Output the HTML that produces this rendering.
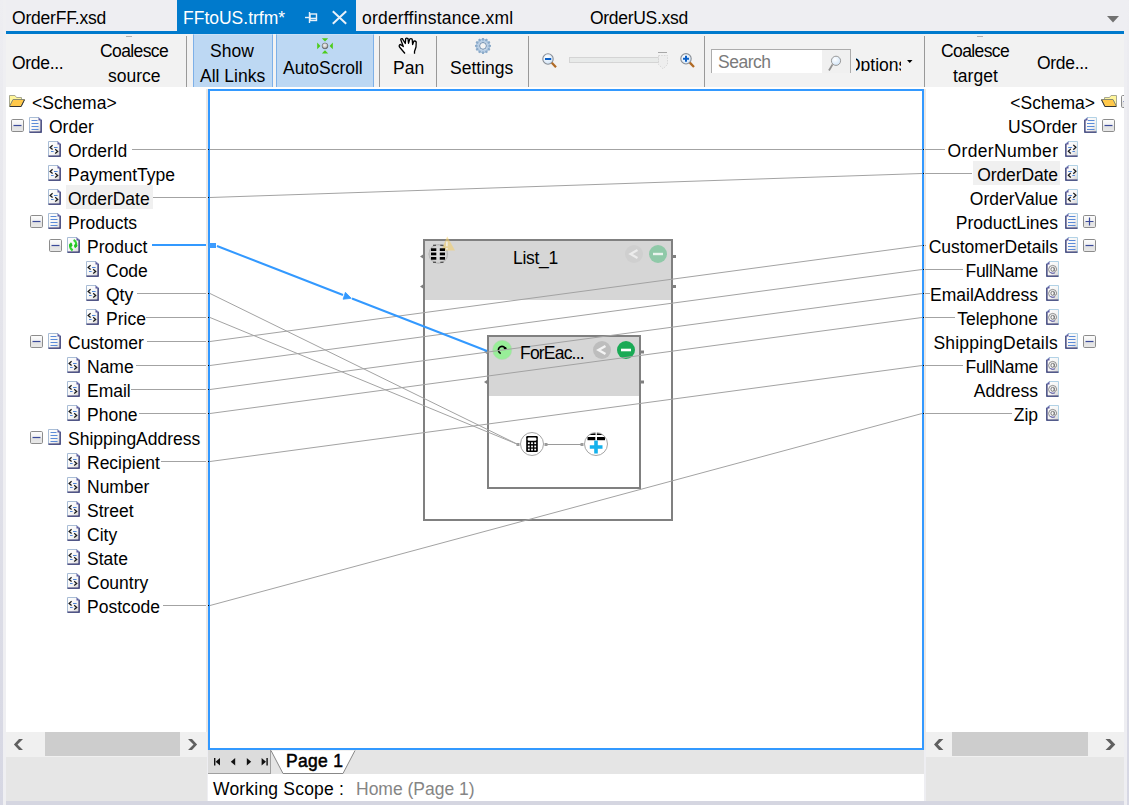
<!DOCTYPE html>
<html><head><meta charset="utf-8"><style>
*{margin:0;padding:0;box-sizing:border-box}
html,body{width:1129px;height:805px;overflow:hidden;background:#eeeef2;font-family:"Liberation Sans",sans-serif;font-size:17.5px;color:#000}
.a{position:absolute}
.t{position:absolute;line-height:20px;white-space:nowrap}
.sep{position:absolute;top:36px;width:1px;height:51px;background:#999}
</style></head><body>
<div class="a" style="left:0px;top:0px;width:6px;height:805px;background:linear-gradient(#eeeef2,#e6e6ec 30%,#d6d7e3)"></div>
<div class="a" style="left:3px;top:0px;width:3px;height:805px;background:#efeff2"></div>
<div class="t" style="left:12px;top:8px;letter-spacing:-0.2px">OrderFF.xsd</div>
<div class="a" style="left:177px;top:0px;width:179px;height:34px;background:#007acc"></div>
<div class="t" style="left:183px;top:8px;color:#fff">FFtoUS.trfm*</div>
<div class="t" style="left:362px;top:8px;letter-spacing:0.2px">orderffinstance.xml</div>
<div class="t" style="left:590px;top:8px;letter-spacing:-0.3px">OrderUS.xsd</div>
<div class="a" style="left:6px;top:31px;width:1118px;height:3px;background:#007acc"></div>
<svg class="a" style="left:300px;top:8px" width="52" height="20" viewBox="0 0 52 20">
<g stroke="#e8f1f9" fill="none" stroke-width="1.4">
<path d="M5 9.5 H9"/><path d="M9.5 4 V15"/><rect x="10" y="6" width="6.5" height="6.5"/><path d="M10 10.5 H16.5" stroke-width="1.6"/>
<path d="M32.8 3.3 L46.2 15.7 M46.2 3.3 L32.8 15.7" stroke-width="2"/>
</g></svg>
<svg class="a" style="left:1107px;top:16px" width="13" height="7"><path d="M0 0 H12 L6 6.5 Z" fill="#717171"/></svg>
<div class="a" style="left:6px;top:34px;width:1118px;height:53px;background:#f2f2f2"></div>
<div class="t" style="left:12px;top:53px;letter-spacing:-0.3px">Orde...</div>
<div class="t" style="left:100px;top:41px;letter-spacing:-0.6px">Coalesce</div>
<div class="t" style="left:108px;top:66px;">source</div>
<div class="sep" style="left:186px"></div>
<div class="a" style="left:193px;top:34px;width:80px;height:53px;background:#bdd8f3;border-left:1px solid #7db0e8;border-right:1px solid #7db0e8;border-top:1px solid #c9e0f6"></div>
<div class="t" style="left:210px;top:41px;">Show</div>
<div class="t" style="left:200px;top:66px;">All Links</div>
<div class="a" style="left:276px;top:34px;width:98px;height:53px;background:#bdd8f3;border-left:1px solid #7db0e8;border-right:1px solid #7db0e8;border-top:1px solid #c9e0f6"></div>
<div class="t" style="left:283px;top:58px;">AutoScroll</div>
<div class="sep" style="left:379px"></div>
<div class="t" style="left:393px;top:58px;">Pan</div>
<div class="sep" style="left:436px"></div>
<div class="t" style="left:450px;top:58px;">Settings</div>
<div class="sep" style="left:528px"></div>
<div class="sep" style="left:704px"></div>
<div class="sep" style="left:924px"></div>
<div class="t" style="left:941px;top:41px;letter-spacing:-0.6px">Coalesce</div>
<div class="t" style="left:953px;top:66px;">target</div>
<div class="t" style="left:1037px;top:53px;letter-spacing:-0.3px">Orde...</div>
<div class="a" style="left:6px;top:87px;width:201px;height:645px;background:#fff"></div>
<div class="a" style="left:206px;top:87px;width:720px;height:2px;background:#fff"></div>
<div class="a" style="left:206px;top:89px;width:2px;height:661px;background:#ebe7e4"></div>
<div class="a" style="left:924px;top:89px;width:2px;height:661px;background:#ece8e5"></div>
<div class="a" style="left:208px;top:89px;width:716px;height:661px;border:2px solid #3399ff;background:#fff"></div>
<div class="a" style="left:926px;top:87px;width:198px;height:645px;background:#fff"></div>
<svg width="0" height="0" style="position:absolute"><defs>
<linearGradient id="gx" x1="0" y1="0" x2="0" y2="1"><stop offset="0" stop-color="#fdfdfd"/><stop offset="0.5" stop-color="#f0f0f0"/><stop offset="0.55" stop-color="#e2e2e2"/><stop offset="1" stop-color="#e8e8e8"/></linearGradient>
<linearGradient id="gp" x1="0" y1="0" x2="1" y2="1"><stop offset="0" stop-color="#ffffff"/><stop offset="0.6" stop-color="#f4f4f4"/><stop offset="1" stop-color="#d0d0d0"/></linearGradient>
<symbol id="exp" viewBox="0 0 13 13"><rect x="0.5" y="0.5" width="12" height="12" rx="1.2" fill="url(#gx)" stroke="#8c8c8c"/><path d="M2.5 6.5 H10.5" stroke="#3b4a9a" stroke-width="1.2"/></symbol>
<symbol id="expp" viewBox="0 0 13 13"><rect x="0.5" y="0.5" width="12" height="12" rx="1.2" fill="url(#gx)" stroke="#8c8c8c"/><path d="M2.5 6.5 H10.5 M6.5 2.5 V10.5" stroke="#3b4a9a" stroke-width="1.2"/></symbol>
<symbol id="page" viewBox="0 0 13 16"><path d="M0.5 0.5 H10 L12.5 3 V15.5 H0.5 Z" fill="url(#gp)" stroke="#a9bdd6" stroke-width="1"/><path d="M12.1 2.8 V15.1 H0.5" stroke="#34346e" stroke-width="1.3" fill="none"/><path d="M9.5 0.3 L12.6 3.4 L9.5 3.4 Z" fill="#5a5aa0"/></symbol>
<symbol id="pager" viewBox="0 0 13 16"><path d="M12.5 0.5 H3 L0.5 3 V15.5 H12.5 Z" fill="url(#gp)" stroke="#b2d2e6" stroke-width="1"/><path d="M0.9 2.8 V15.1 H12.5" stroke="#34346e" stroke-width="1.3" fill="none"/><path d="M3.5 0.3 L0.4 3.4 L3.5 3.4 Z" fill="#5a5aa0"/></symbol>
<symbol id="doc" viewBox="0 0 13 16"><use href="#page"/><path d="M2.5 3.5 H8.5 M2.5 6.5 H9.5 M2.5 9.5 H9.5 M2.5 12.5 H9.5" stroke="#5b8bd8" stroke-width="1"/></symbol>
<symbol id="docr" viewBox="0 0 13 16"><use href="#pager"/><path d="M4 3.5 H10.5 M3 6.5 H10.5 M3 9.5 H10.5 M3 12.5 H10.5" stroke="#5b8bd8" stroke-width="1"/></symbol>
<symbol id="fld" viewBox="0 0 13 16"><use href="#page"/><path d="M4.6 4.3 L2.1 6.4 L4.6 8.5 M7.2 8.3 L9.7 10.4 L7.2 12.5" stroke="#1a1a1a" stroke-width="1.25" fill="none"/><path d="M6 6.5 H9.6 M3 10.5 H5.6" stroke="#4f86d8" stroke-width="1.1"/></symbol>
<symbol id="fldr" viewBox="0 0 13 16"><use href="#pager"/><path d="M8.3 3.9 L10.9 6.3 L8.3 8.7 M5.8 7.9 L3.3 10.2 L5.8 12.5" stroke="#1a1a1a" stroke-width="1.25" fill="none"/><path d="M3.2 6.5 H6.9 M7.4 10.5 H9.9" stroke="#4f86d8" stroke-width="1.1"/></symbol>
<symbol id="atr" viewBox="0 0 13 16"><use href="#pager"/><path d="M9.2 11.6 Q7.5 12.6 6 12.4 Q2.6 12 2.6 8.3 Q2.8 4.6 6.6 4.4 Q10.6 4.5 10.6 8.2 Q10.5 10.3 9 10.4 Q8.3 10.4 8.3 9.4 V6.6" stroke="#808080" stroke-width="0.9" fill="none"/><ellipse cx="6.6" cy="8.3" rx="1.7" ry="2" fill="none" stroke="#6a6a6a" stroke-width="0.9"/><path d="M4.3 11.4 Q6.3 12.8 8.8 11.9" stroke="#5656c8" stroke-width="0.8" fill="none"/></symbol>
<symbol id="rep" viewBox="0 0 13 16"><use href="#page"/><path d="M4.6 6 C2.2 8 2.5 11.2 5.6 13.5" stroke="#33d433" stroke-width="2.2" fill="none"/><circle cx="3.7" cy="8.2" r="1.7" fill="#22c422"/><path d="M6.6 3 C9.6 4.4 10 8 7.8 10.6" stroke="#33d433" stroke-width="2.2" fill="none"/><circle cx="8.7" cy="8.6" r="1.7" fill="#22c422"/></symbol>
<symbol id="fold" viewBox="0 0 16 12"><path d="M0.5 0.5 H6 L7.5 2.5 H12.5 V5 H4 L0.5 11.5 Z" fill="#fff59a" stroke="#a8a890"/><path d="M4 4.5 H15.5 L12 11.5 H0.5 Z" fill="#ffc84a" stroke="#8a8a70"/><path d="M1 11.5 H12.2 L15.5 4.8" stroke="#333" stroke-width="1" fill="none"/></symbol>
</defs></svg>
<svg class="a" style="left:9px;top:95px" width="16" height="12"><use href="#fold"/></svg>
<div class="t" style="left:32px;top:93px;">&lt;Schema&gt;</div>
<svg class="a" style="left:11px;top:119px" width="13" height="13"><use href="#exp"/></svg>
<svg class="a" style="left:29px;top:117px" width="13" height="16"><use href="#doc"/></svg>
<div class="t" style="left:49px;top:117px;">Order</div>
<svg class="a" style="left:48px;top:141px" width="13" height="16"><use href="#fld"/></svg>
<div class="t" style="left:68px;top:141px;">OrderId</div>
<svg class="a" style="left:48px;top:165px" width="13" height="16"><use href="#fld"/></svg>
<div class="t" style="left:68px;top:165px;">PaymentType</div>
<div class="a" style="left:66px;top:185px;width:87px;height:24px;background:#f0f0f0"></div>
<svg class="a" style="left:48px;top:189px" width="13" height="16"><use href="#fld"/></svg>
<div class="t" style="left:68px;top:189px;">OrderDate</div>
<svg class="a" style="left:30px;top:215px" width="13" height="13"><use href="#exp"/></svg>
<svg class="a" style="left:48px;top:213px" width="13" height="16"><use href="#doc"/></svg>
<div class="t" style="left:68px;top:213px;">Products</div>
<svg class="a" style="left:49px;top:239px" width="13" height="13"><use href="#exp"/></svg>
<svg class="a" style="left:67px;top:237px" width="13" height="16"><use href="#rep"/></svg>
<div class="t" style="left:87px;top:237px;">Product</div>
<svg class="a" style="left:86px;top:261px" width="13" height="16"><use href="#fld"/></svg>
<div class="t" style="left:106px;top:261px;">Code</div>
<svg class="a" style="left:86px;top:285px" width="13" height="16"><use href="#fld"/></svg>
<div class="t" style="left:106px;top:285px;">Qty</div>
<svg class="a" style="left:86px;top:309px" width="13" height="16"><use href="#fld"/></svg>
<div class="t" style="left:106px;top:309px;">Price</div>
<svg class="a" style="left:30px;top:335px" width="13" height="13"><use href="#exp"/></svg>
<svg class="a" style="left:48px;top:333px" width="13" height="16"><use href="#doc"/></svg>
<div class="t" style="left:68px;top:333px;">Customer</div>
<svg class="a" style="left:67px;top:357px" width="13" height="16"><use href="#fld"/></svg>
<div class="t" style="left:87px;top:357px;">Name</div>
<svg class="a" style="left:67px;top:381px" width="13" height="16"><use href="#fld"/></svg>
<div class="t" style="left:87px;top:381px;">Email</div>
<svg class="a" style="left:67px;top:405px" width="13" height="16"><use href="#fld"/></svg>
<div class="t" style="left:87px;top:405px;">Phone</div>
<svg class="a" style="left:30px;top:431px" width="13" height="13"><use href="#exp"/></svg>
<svg class="a" style="left:48px;top:429px" width="13" height="16"><use href="#doc"/></svg>
<div class="t" style="left:68px;top:429px;">ShippingAddress</div>
<svg class="a" style="left:67px;top:453px" width="13" height="16"><use href="#fld"/></svg>
<div class="t" style="left:87px;top:453px;">Recipient</div>
<svg class="a" style="left:67px;top:477px" width="13" height="16"><use href="#fld"/></svg>
<div class="t" style="left:87px;top:477px;">Number</div>
<svg class="a" style="left:67px;top:501px" width="13" height="16"><use href="#fld"/></svg>
<div class="t" style="left:87px;top:501px;">Street</div>
<svg class="a" style="left:67px;top:525px" width="13" height="16"><use href="#fld"/></svg>
<div class="t" style="left:87px;top:525px;">City</div>
<svg class="a" style="left:67px;top:549px" width="13" height="16"><use href="#fld"/></svg>
<div class="t" style="left:87px;top:549px;">State</div>
<svg class="a" style="left:67px;top:573px" width="13" height="16"><use href="#fld"/></svg>
<div class="t" style="left:87px;top:573px;">Country</div>
<svg class="a" style="left:67px;top:597px" width="13" height="16"><use href="#fld"/></svg>
<div class="t" style="left:87px;top:597px;">Postcode</div>
<div class="t" style="right:34px;top:93px;">&lt;Schema&gt;</div>
<svg class="a" style="left:1101px;top:95px;transform:scaleX(-1)" width="16" height="12"><use href="#fold"/></svg>
<div class="t" style="right:52px;top:117px;">USOrder</div>
<svg class="a" style="left:1084px;top:117px" width="13" height="16"><use href="#docr"/></svg>
<svg class="a" style="left:1102px;top:119px" width="13" height="13"><use href="#exp"/></svg>
<div class="t" style="right:70.65px;top:141px;letter-spacing:0.35px;">OrderNumber</div>
<svg class="a" style="left:1065px;top:141px" width="13" height="16"><use href="#fldr"/></svg>
<div class="a" style="left:973px;top:161px;width:87px;height:24px;background:#f0f0f0"></div>
<div class="t" style="right:71px;top:165px;letter-spacing:-0.1px;">OrderDate</div>
<svg class="a" style="left:1065px;top:165px" width="13" height="16"><use href="#fldr"/></svg>
<div class="t" style="right:71px;top:189px;">OrderValue</div>
<svg class="a" style="left:1065px;top:189px" width="13" height="16"><use href="#fldr"/></svg>
<div class="t" style="right:71px;top:213px;">ProductLines</div>
<svg class="a" style="left:1065px;top:213px" width="13" height="16"><use href="#docr"/></svg>
<svg class="a" style="left:1083px;top:215px" width="13" height="13"><use href="#expp"/></svg>
<div class="t" style="right:71px;top:237px;">CustomerDetails</div>
<svg class="a" style="left:1065px;top:237px" width="13" height="16"><use href="#docr"/></svg>
<svg class="a" style="left:1083px;top:239px" width="13" height="13"><use href="#exp"/></svg>
<div class="t" style="right:91px;top:261px;letter-spacing:-0.3px;">FullName</div>
<svg class="a" style="left:1046px;top:261px" width="13" height="16"><use href="#atr"/></svg>
<div class="t" style="right:91px;top:285px;">EmailAddress</div>
<svg class="a" style="left:1046px;top:285px" width="13" height="16"><use href="#atr"/></svg>
<div class="t" style="right:91px;top:309px;">Telephone</div>
<svg class="a" style="left:1046px;top:309px" width="13" height="16"><use href="#atr"/></svg>
<div class="t" style="right:71px;top:333px;letter-spacing:0.2px;">ShippingDetails</div>
<svg class="a" style="left:1065px;top:333px" width="13" height="16"><use href="#docr"/></svg>
<svg class="a" style="left:1083px;top:335px" width="13" height="13"><use href="#exp"/></svg>
<div class="t" style="right:91px;top:357px;letter-spacing:-0.3px;">FullName</div>
<svg class="a" style="left:1046px;top:357px" width="13" height="16"><use href="#atr"/></svg>
<div class="t" style="right:91px;top:381px;">Address</div>
<svg class="a" style="left:1046px;top:381px" width="13" height="16"><use href="#atr"/></svg>
<div class="t" style="right:91px;top:405px;">Zip</div>
<svg class="a" style="left:1046px;top:405px" width="13" height="16"><use href="#atr"/></svg>
<svg class="a" style="left:0;top:0" width="1129" height="805"><rect x="424" y="240" width="248" height="280" fill="#fff" stroke="#808080" stroke-width="2"/><rect x="425" y="241" width="246" height="59" fill="#d6d6d6"/><rect x="488" y="336" width="152" height="152" fill="#fff" stroke="#808080" stroke-width="2"/><rect x="489" y="337" width="150" height="59" fill="#d6d6d6"/><path d="M420 256.5 L423 254.5 L423 258.5 Z" fill="#808080"/><rect x="673" y="255.0" width="3" height="3" fill="#808080"/><path d="M420 286.5 L423 284.5 L423 288.5 Z" fill="#808080"/><rect x="673" y="285.0" width="3" height="3" fill="#808080"/><path d="M484 352 L487 350 L487 354 Z" fill="#808080"/><rect x="641" y="350.5" width="3" height="3" fill="#808080"/><path d="M484 382 L487 380 L487 384 Z" fill="#808080"/><rect x="641" y="380.5" width="3" height="3" fill="#808080"/><defs><radialGradient id="gl1" cx="0.5" cy="0.5" r="0.5"><stop offset="0" stop-color="#e2e2e2"/><stop offset="0.8" stop-color="#d2d2d2"/><stop offset="1" stop-color="#a8a8a8"/></radialGradient></defs><circle cx="438.3" cy="253.9" r="9.8" fill="url(#gl1)" fill-opacity="0.92"/><path d="M447.2 236.6 L455 250.6 H441.2 Z" fill="rgb(246,208,102)" fill-opacity="0.55"/><path d="M446.9 241.5 V246.2 M446.9 248 V249.6" stroke="#f2f0ea" stroke-width="1.5"/><g fill="#000"><rect x="431" y="248.3" width="5.3" height="2.7"/><rect x="439.8" y="248.3" width="5.2" height="2.7"/><rect x="431" y="252.6" width="5.3" height="2.7"/><rect x="439.8" y="252.6" width="5.2" height="2.7"/><rect x="431" y="257" width="5.3" height="2.7"/><rect x="439.8" y="257" width="5.2" height="2.7"/></g><path d="M433 245.3 H436 M440.3 245.3 H443.5 M433 262.3 H436 M440.3 262.3 H443.5" stroke="#333" stroke-width="1.1"/><circle cx="634" cy="254" r="9" fill="#cfcfcf"/><path d="M637.5 250 L630.5 254 L637.5 258" stroke="#ececec" stroke-width="2.2" fill="none"/><circle cx="658" cy="254" r="9" fill="#8fc9a8"/><path d="M653 254 H663" stroke="#e9f3ed" stroke-width="2.4"/><circle cx="502.2" cy="349.9" r="9.6" fill="#98ee98" stroke="#b8d0b8" stroke-width="0.5"/><path d="M504.95 347.93 A3.6 3.6 0 1 0 500.77 353.38" stroke="#000" stroke-width="1.6" fill="none"/><circle cx="505.2" cy="348.2" r="1.3" fill="#000"/><circle cx="602" cy="350" r="9" fill="#bdbdbd"/><path d="M605.5 346 L598.5 350 L605.5 354" stroke="#f4f4f4" stroke-width="2.4" fill="none"/><circle cx="626" cy="350" r="9" fill="#1aaa55"/><path d="M621 350 H631" stroke="#fff" stroke-width="2.6"/><circle cx="532" cy="444" r="11.5" fill="#fff" stroke="#9a9a9a" stroke-width="0.9"/><rect x="526.2" y="436" width="11.6" height="16" rx="1.3" fill="#000"/><rect x="527.6" y="437.5" width="8.8" height="3.2" rx="1.2" fill="#fff"/><rect x="527.9" y="442.3" width="1.8" height="1.8" fill="#fff"/><rect x="531.1" y="442.3" width="1.8" height="1.8" fill="#fff"/><rect x="534.3000000000001" y="442.3" width="1.8" height="1.8" fill="#fff"/><rect x="527.9" y="445.6" width="1.8" height="1.8" fill="#fff"/><rect x="531.1" y="445.6" width="1.8" height="1.8" fill="#fff"/><rect x="534.3000000000001" y="445.6" width="1.8" height="1.8" fill="#fff"/><rect x="527.9" y="448.70000000000005" width="1.8" height="1.8" fill="#fff"/><rect x="531.1" y="448.70000000000005" width="1.8" height="1.8" fill="#fff"/><rect x="534.3000000000001" y="448.70000000000005" width="1.8" height="1.8" fill="#fff"/><defs><clipPath id="csum"><circle cx="596" cy="444" r="11"/></clipPath></defs><circle cx="596" cy="444" r="11.5" fill="#fff" stroke="#9a9a9a" stroke-width="0.9"/><g clip-path="url(#csum)" fill="#000"><rect x="588" y="433.3" width="16" height="1.7"/><rect x="587.5" y="437" width="7.8" height="3.2"/><rect x="597" y="437" width="8" height="3.2"/></g><path d="M596.2 432 V437" stroke="#fff" stroke-width="1.3"/><path d="M589.8 447 H602.5 M596 440.6 V453.5" stroke="#14b1ec" stroke-width="3.6"/><path d="M546 444.5 H582" stroke="#9a9a9a" stroke-width="1"/><g fill="#9a9a9a"><rect x="516.5" y="443" width="3" height="3"/><rect x="544.5" y="443" width="3" height="3"/><rect x="580.5" y="443" width="3" height="3"/></g><path d="M132 149.5 H206 M153 197.5 H206 M137 293.5 H206 M146 317.5 H206 M147 341.5 H206 M136 365.5 H206 M131 389.5 H206 M139 413.5 H206 M161 461.5 H206 M163 605.5 H206 M210 149.5 L922 149.5 M210 197.5 L922 173.5 M210 341.5 L922 245.5 M210 365.5 L922 269.5 M210 389.5 L922 293.5 M210 413.5 L922 317.5 M210 461.5 L922 365.5 M210 605.5 L922 413.5 M925 149.5 H945 M925 173.5 H972 M925 245.5 H926 M925 269.5 H963 M925 293.5 H930 M925 317.5 H955 M925 365.5 H963 M925 413.5 H1012 M210 293.5 L518 444.5 M210 317.5 L518 444.5" stroke="#a3a3a3" stroke-width="1" fill="none"/><rect x="208" y="149" width="1" height="1" fill="#000"/><rect x="208" y="197" width="1" height="1" fill="#000"/><rect x="208" y="293" width="1" height="1" fill="#000"/><rect x="208" y="317" width="1" height="1" fill="#000"/><rect x="208" y="341" width="1" height="1" fill="#000"/><rect x="208" y="365" width="1" height="1" fill="#000"/><rect x="208" y="389" width="1" height="1" fill="#000"/><rect x="208" y="413" width="1" height="1" fill="#000"/><rect x="208" y="461" width="1" height="1" fill="#000"/><rect x="208" y="605" width="1" height="1" fill="#000"/><rect x="923" y="149" width="1" height="1" fill="#000"/><rect x="923" y="173" width="1" height="1" fill="#000"/><rect x="923" y="245" width="1" height="1" fill="#000"/><rect x="923" y="269" width="1" height="1" fill="#000"/><rect x="923" y="293" width="1" height="1" fill="#000"/><rect x="923" y="317" width="1" height="1" fill="#000"/><rect x="923" y="365" width="1" height="1" fill="#000"/><rect x="923" y="413" width="1" height="1" fill="#000"/><path d="M152 245 H206" stroke="#3399ff" stroke-width="2"/><rect x="209" y="243" width="7" height="5" fill="#3d9cff"/><path d="M217 246 L343 295 M352 298.5 L487 351" stroke="#3399ff" stroke-width="2" fill="none"/><path d="M351.3 298.3 L345.4 292.3 L343.1 299.2 Z" fill="#3399ff" stroke="#3399ff" stroke-width="0.8"/></svg>
<div class="a" style="left:126px;top:36px;width:6px;height:1px;background:#b0b0b0"></div>
<div class="a" style="left:977px;top:36px;width:6px;height:1px;background:#b0b0b0"></div>
<svg class="a" style="left:0;top:0" width="1129" height="90">
<defs><radialGradient id="gball" cx="0.45" cy="0.4" r="0.6"><stop offset="0" stop-color="#f4f4f4"/><stop offset="0.6" stop-color="#c8c8c8"/><stop offset="1" stop-color="#555"/></radialGradient>
<radialGradient id="glens" cx="0.4" cy="0.35" r="0.7"><stop offset="0" stop-color="#ffffff"/><stop offset="1" stop-color="#cfe3f7"/></radialGradient></defs>
<g fill="#4ccc1a"><path d="M321.8 38.2 H328.2 L325 41.5 Z"/><path d="M321.8 53.6 H328.2 L325 50.3 Z"/><path d="M317.2 42.6 V49.2 L320.4 45.9 Z"/><path d="M332.8 42.6 V49.2 L329.6 45.9 Z"/></g>
<circle cx="325" cy="45.9" r="2.9" fill="url(#gball)" stroke="#666" stroke-width="0.6"/>
<path transform="translate(2 0)" d="M403 53.5 L397.5 47 Q396.5 45 398.5 44.5 L401.3 46.5 L398.8 39.8 Q398.6 38.5 400.3 38.6 L403.3 43.5 L403.7 38.6 Q404.5 37.6 406 38.6 L406.5 43.3 L407.8 39 Q409 38.2 410.2 39.3 L410.6 44.5 L411.8 41.2 Q413.2 40.6 414.2 42 L414 47 L412.5 51.5 V53.8" fill="#fff" stroke="#000" stroke-width="1.3" stroke-linejoin="round"/>
<g transform="translate(483 45.9)"><circle r="5.5" fill="none" stroke="#b9cfe6" stroke-width="3.2"/>
<g stroke="#8aa9c8" stroke-width="1.9"><path d="M0 -5.5 V-8" transform="rotate(0)"/><path d="M0 -5.5 V-8" transform="rotate(30)"/><path d="M0 -5.5 V-8" transform="rotate(60)"/><path d="M0 -5.5 V-8" transform="rotate(90)"/><path d="M0 -5.5 V-8" transform="rotate(120)"/><path d="M0 -5.5 V-8" transform="rotate(150)"/><path d="M0 -5.5 V-8" transform="rotate(180)"/><path d="M0 -5.5 V-8" transform="rotate(210)"/><path d="M0 -5.5 V-8" transform="rotate(240)"/><path d="M0 -5.5 V-8" transform="rotate(270)"/><path d="M0 -5.5 V-8" transform="rotate(300)"/><path d="M0 -5.5 V-8" transform="rotate(330)"/></g>
<circle r="3.4" fill="#f4f4f4" stroke="#6d8db0" stroke-width="1"/><circle r="6.9" fill="none" stroke="#8fadcb" stroke-width="0.5"/></g>
<g><circle cx="548" cy="59" r="5.2" fill="url(#glens)" stroke="#8a8f96" stroke-width="1.1"/><path d="M551.8 62.8 L556 67.2" stroke="#b06a25" stroke-width="2.3"/><rect x="545" y="58" width="6.2" height="2" fill="#0a5fc6"/></g>
<g><circle cx="686" cy="58.8" r="5.2" fill="url(#glens)" stroke="#8a8f96" stroke-width="1.1"/><path d="M689.8 62.6 L694 67" stroke="#b06a25" stroke-width="2.3"/><path d="M683 58.8 H689 M686 55.8 V61.8" stroke="#0a5fc6" stroke-width="2"/></g>
<rect x="569.5" y="57.5" width="89" height="5" fill="#e8eae9" stroke="#d4d4d4" stroke-width="1"/>
<path d="M658 52.5 H667" stroke="#a8a8a8" stroke-width="1"/>
<path d="M658.5 55.5 H667.5 V64.5 L663 68.8 L658.5 64.5 Z" fill="#eeeeee" stroke="#d0d0d0" stroke-width="0.8" stroke-dasharray="1.5 1.2"/>
<rect x="711.5" y="49.5" width="139" height="30" fill="#fff" stroke="#acacac" stroke-width="1"/>
<rect x="822" y="50" width="28" height="23" fill="#f0f0f0"/>
<rect x="711" y="73" width="141" height="14" fill="#f2f2f2"/>
<circle cx="836" cy="60.8" r="4.6" fill="url(#glens)" stroke="#9a9a9a" stroke-width="1"/><path d="M832.6 64.4 L829 70.5" stroke="#909090" stroke-width="1.8"/>
<path d="M907 60 H912.5 L909.75 63 Z" fill="#000"/>
</svg>
<div class="t" style="left:718px;top:52px;color:#7a7a7a;letter-spacing:-0.5px">Search</div>
<div class="a" style="left:856px;top:50px;width:45px;height:21px;overflow:hidden"><div class="t" style="left:-9px;top:5px">Options</div></div>
<div class="a" style="left:1121px;top:95px;width:3px;height:13px;overflow:hidden"><svg class="a" style="left:0;top:0" width="13" height="13"><use href="#exp"/></svg></div>
<div class="t" style="left:513px;top:248px;letter-spacing:-0.3px">List_1</div>
<div class="t" style="left:520px;top:343px;letter-spacing:-0.8px">ForEac...</div>
<div class="a" style="left:6px;top:756px;width:201px;height:45px;background:#e6e6e6"></div>
<div class="a" style="left:926px;top:756px;width:198px;height:45px;background:#e6e6e6"></div>
<div class="a" style="left:6px;top:732px;width:201px;height:25px;background:#f0f0f0"></div>
<div class="a" style="left:45px;top:732px;width:135px;height:24px;background:#cdcdcd"></div>
<svg class="a" style="left:6px;top:732px" width="201" height="25"><path d="M17 7 H13 L7.9 12.5 L13 18 H17 L11.5 12.5 Z M182 7 H186 L191.1 12.5 L186 18 H182 L187.5 12.5 Z" fill="#606060"/></svg>
<div class="a" style="left:926px;top:732px;width:198px;height:25px;background:#f0f0f0"></div>
<div class="a" style="left:952px;top:732px;width:136px;height:24px;background:#cdcdcd"></div>
<svg class="a" style="left:926px;top:732px" width="198" height="25"><path d="M17.4 7 H13 L8 12.5 L13 18 H17.4 L11.9 12.5 Z M179.5 7 H184 L189.3 12.5 L184 18 H179.5 L185 12.5 Z" fill="#606060"/></svg>
<div class="a" style="left:208px;top:750px;width:716px;height:24px;background:#e5e5e5"></div>
<div class="a" style="left:208px;top:750px;width:63px;height:24px;background:#dcdcdc;border-right:1px solid #a0a0a0;border-bottom:1px solid #a0a0a0"></div>
<svg class="a" style="left:208px;top:750px" width="150" height="24"><g fill="#111"><rect x="6" y="8" width="1.4" height="7.5"/><path d="M12 8 L7.6 11.75 L12 15.5Z"/><path d="M27.2 8 L22.8 11.75 L27.2 15.5Z"/><path d="M38.8 8 L43.2 11.75 L38.8 15.5Z"/><path d="M53.6 8 L58 11.75 L53.6 15.5Z"/><rect x="58.4" y="8" width="1.4" height="7.5"/></g><path d="M63 0.5 L75 23.5 H135 L147 0.5" fill="#fff" stroke="#888" stroke-width="1"/></svg>
<div class="t" style="left:286px;top:751px;-webkit-text-stroke:0.5px #000;letter-spacing:0.3px">Page 1</div>
<div class="a" style="left:208px;top:774px;width:716px;height:27px;background:#fff"></div>
<div class="t" style="left:213px;top:779px;letter-spacing:0.2px">Working Scope :</div>
<div class="t" style="left:356px;top:779px;color:#858585">Home (Page 1)</div>
<div class="a" style="left:6px;top:801px;width:1118px;height:4px;background:#d5d6e1"></div>
<div class="a" style="left:1124px;top:0px;width:5px;height:805px;background:#eeeef2"></div>
<div class="a" style="left:1127px;top:0px;width:2px;height:805px;background:linear-gradient(#eeeef2,#e6e6ec 30%,#d6d7e3)"></div>
</body></html>
